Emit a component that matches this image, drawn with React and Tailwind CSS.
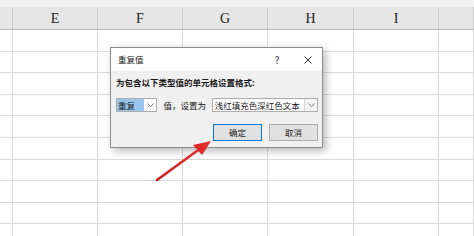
import React from "react";

const cols = [
  { w: "w-[13px]", l: "" },
  { w: "w-[85px]", l: "E" },
  { w: "w-[85px]", l: "F" },
  { w: "w-[85px]", l: "G" },
  { w: "w-[86px]", l: "H" },
  { w: "w-[85px]", l: "I" },
  { w: "flex-1", l: "" },
];

const rows = Array.from({ length: 10 });

function Arrow() {
  return (
    <svg className="absolute left-0 top-0" width="474" height="236" viewBox="0 0 474 236">
      <defs>
        <linearGradient id="ag" x1="0" y1="1" x2="1" y2="0">
          <stop offset="0" stopColor="#c81e1e" />
          <stop offset="1" stopColor="#e53030" />
        </linearGradient>
      </defs>
      <line x1="157" y1="180" x2="201" y2="148" stroke="url(#ag)" strokeWidth="2.6" strokeLinecap="round" />
      <polygon points="211,141 193,145 202,155" fill="#df2a2a" />
    </svg>
  );
}

function Chevron() {
  return (
    <svg width="7" height="4" viewBox="0 0 7 4">
      <path d="M0.5 0.5 L3.5 3.5 L6.5 0.5" fill="none" stroke="#666" strokeWidth="0.9" />
    </svg>
  );
}

function Dialog() {
  const cjk = { fontFamily: '"Noto Sans CJK SC", "Noto Sans", sans-serif' };
  return (
    <div
      className="absolute left-[110px] top-[47px] w-[213px] h-[101px] border border-[#8c8c8c] bg-[#f0f0f0] shadow-[3px_3px_8px_rgba(0,0,0,0.28)] flex flex-col text-[#1a1a1a] whitespace-nowrap"
      style={cjk}
    >
      <div className="h-[23px] bg-white flex items-center pl-[7px] text-[8.5px]">
        <span className="flex-1">重复值</span>
        <span className="w-[10px] text-center text-[10px] text-[#333]">?</span>
        <svg className="ml-[22px] mr-[10px]" width="8" height="8" viewBox="0 0 8 8">
          <path d="M0.5 0.5 L7.5 7.5 M7.5 0.5 L0.5 7.5" stroke="#333" strokeWidth="1" />
        </svg>
      </div>
      <div className="flex flex-col pl-[5px] pr-[4px]">
        <div className="pt-[5px] h-[17px] leading-[12px] text-[8.5px] font-bold">为包含以下类型值的单元格设置格式:</div>
        <div className="mt-[10px] flex items-center h-[14px] text-[8.5px]">
          <div className="w-[42px] h-[14px] border border-[#adadad] bg-white flex">
            <div className="w-[27px] bg-[#99c7ef] leading-[12px] pl-[1px]">重复</div>
            <div className="flex-1 flex items-center justify-center">
              <Chevron />
            </div>
          </div>
          <div className="ml-[6px] w-[49px] leading-[12px]">值，设置为</div>
          <div className="w-[108px] h-[14px] border border-[#adadad] bg-white flex">
            <div className="flex-1 leading-[12px] pl-[2px] overflow-hidden">浅红填充色深红色文本</div>
            <div className="w-[13px] border-l border-[#d6d6d6] bg-[#f4f4f4] flex items-center justify-center">
              <Chevron />
            </div>
          </div>
        </div>
        <div className="mt-[12px] flex justify-end gap-[7px] text-[8.5px]">
          <div className="w-[49px] h-[17px] border border-[#0078d7] bg-[#e1e1e1] flex items-center justify-center leading-none">
            确定
          </div>
          <div className="w-[49px] h-[17px] border border-[#adadad] bg-[#e1e1e1] flex items-center justify-center leading-none">
            取消
          </div>
        </div>
      </div>
    </div>
  );
}

export default function App() {
  return (
    <div className="relative w-[474px] h-[236px] overflow-hidden bg-white">
      <div className="h-[7px] bg-[#f2f2f2]" />
      <div className="flex h-[23px] bg-[#e6e6e6] border-b border-[#bdbdbd]">
        {cols.map((c, i) => (
          <div
            key={i}
            className={`${c.w} shrink-0 border-r border-[#cdcdcd] flex items-center justify-center text-[14px] text-[#222]`}
            style={{ fontFamily: '"Liberation Serif", "DejaVu Serif", serif' }}
          >
            {c.l}
          </div>
        ))}
      </div>
      {rows.map((_, r) => (
        <div key={r} className="flex h-[21.6px] border-b border-[#dadada]">
          {cols.map((c, i) => (
            <div key={i} className={`${c.w} shrink-0 border-r border-[#dadada]`} />
          ))}
        </div>
      ))}
      <Dialog />
      <Arrow />
    </div>
  );
}
